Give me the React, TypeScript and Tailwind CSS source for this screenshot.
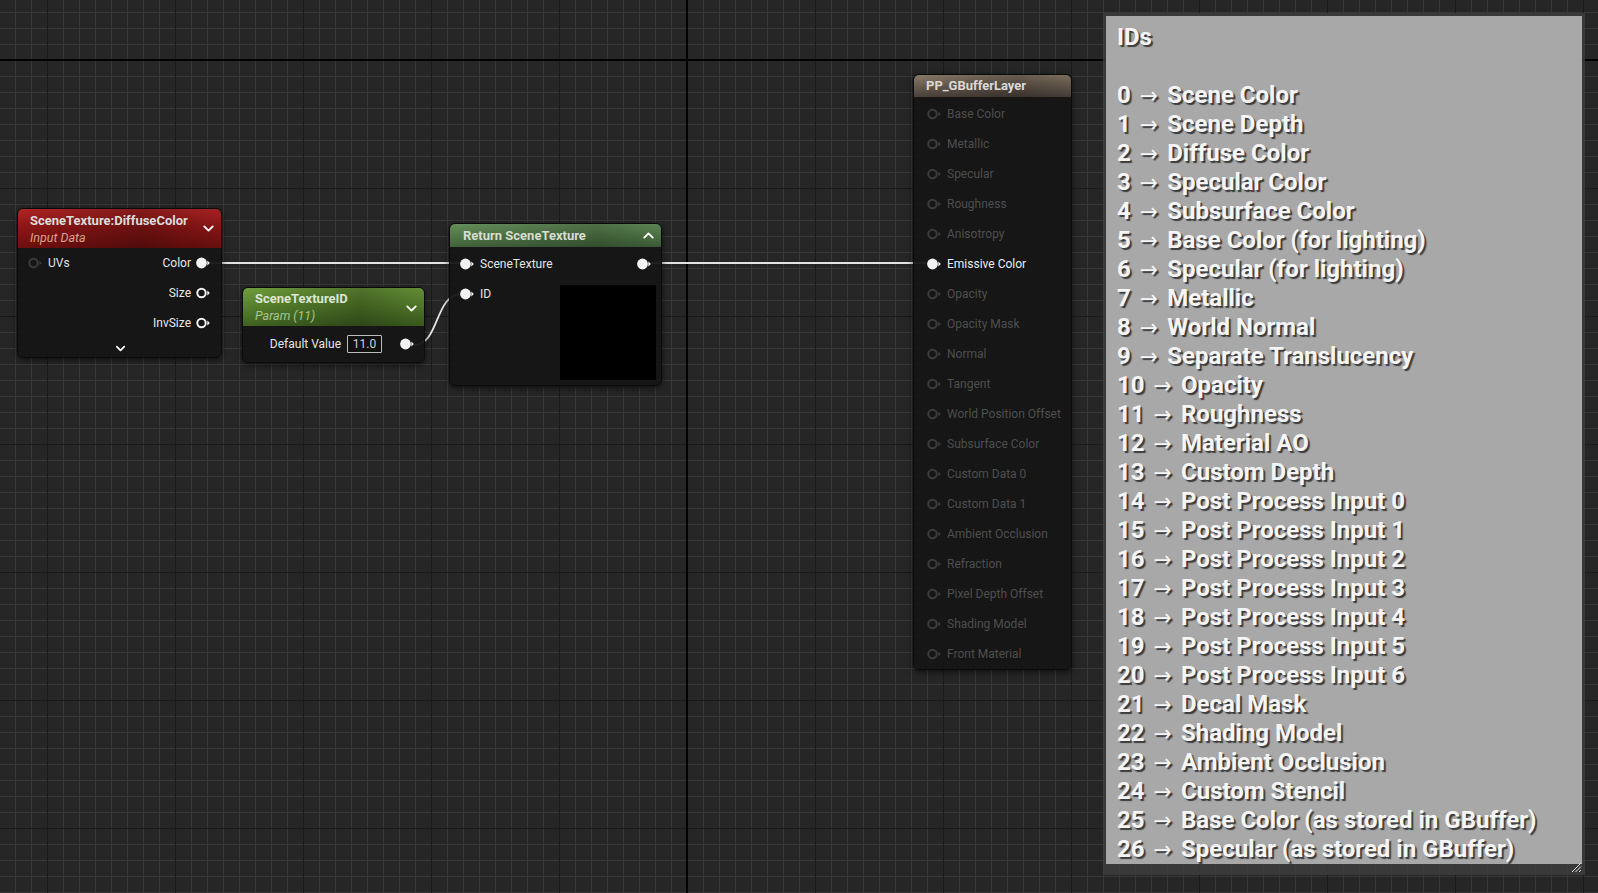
import React from "react";
import { ChevronDown, ChevronUp } from "lucide-react";

type PinKind = "filled" | "ringWhite" | "ringDark" | "ringDim";

function Pin({ kind }: { kind: PinKind }) {
  const color =
    kind === "filled" || kind === "ringWhite"
      ? "#f2f2f2"
      : kind === "ringDark"
      ? "#3a3a3a"
      : "#3c3c3c";
  return (
    <svg width="15" height="12" viewBox="0 0 15 12" className="shrink-0">
      {kind === "filled" ? (
        <circle cx="5.5" cy="6" r="5.4" fill={color} />
      ) : (
        <circle cx="5.5" cy="6" r="4.2" fill="none" stroke={color} strokeWidth="2" />
      )}
      <polygon points="11.3,3.6 13.9,6 11.3,8.4" fill={color} />
    </svg>
  );
}

const ppRows = [
  "Base Color",
  "Metallic",
  "Specular",
  "Roughness",
  "Anisotropy",
  "Emissive Color",
  "Opacity",
  "Opacity Mask",
  "Normal",
  "Tangent",
  "World Position Offset",
  "Subsurface Color",
  "Custom Data 0",
  "Custom Data 1",
  "Ambient Occlusion",
  "Refraction",
  "Pixel Depth Offset",
  "Shading Model",
  "Front Material",
];

const ids = [
  "Scene Color",
  "Scene Depth",
  "Diffuse Color",
  "Specular Color",
  "Subsurface Color",
  "Base Color (for lighting)",
  "Specular (for lighting)",
  "Metallic",
  "World Normal",
  "Separate Translucency",
  "Opacity",
  "Roughness",
  "Material AO",
  "Custom Depth",
  "Post Process Input 0",
  "Post Process Input 1",
  "Post Process Input 2",
  "Post Process Input 3",
  "Post Process Input 4",
  "Post Process Input 5",
  "Post Process Input 6",
  "Decal Mask",
  "Shading Model",
  "Ambient Occlusion",
  "Custom Stencil",
  "Base Color (as stored in GBuffer)",
  "Specular (as stored in GBuffer)",
];

export default function App() {
  return (
    <div className="relative w-[1598px] h-[893px] overflow-hidden font-[Roboto,sans-serif] bg-[#262626] [background-image:linear-gradient(to_right,#1a1a1a_1px,transparent_1px),linear-gradient(to_bottom,#1a1a1a_1px,transparent_1px),linear-gradient(to_right,#383838_1px,transparent_1px),linear-gradient(to_bottom,#383838_1px,transparent_1px)] [background-size:128px_128px,128px_128px,16px_16px,16px_16px] [background-position:47px_60px,47px_60px,15px_12px,15px_12px]">
      {/* origin axes */}
      <div className="absolute left-[686px] top-0 w-[2px] h-full bg-black" />
      <div className="absolute left-0 top-[59px] h-[2px] w-full bg-black" />

      {/* wires */}
      <svg className="absolute left-0 top-0" width="1598" height="893">
        <line x1="210" y1="263" x2="462" y2="263" stroke="#e4e4e4" strokeWidth="1.8" />
        <line x1="648" y1="263" x2="934" y2="263" stroke="#e4e4e4" strokeWidth="1.8" />
        <path d="M 414 345 C 440 345, 434 294, 462 294" fill="none" stroke="#e4e4e4" strokeWidth="1.8" />
      </svg>

      {/* Node 1: SceneTexture:DiffuseColor */}
      <div className="absolute left-[17px] top-[208px] w-[205px] h-[150px] rounded-[6px] bg-[#151515]/95 border border-[#0b0b0b] shadow-[0_2px_6px_rgba(0,0,0,0.6)] overflow-hidden flex flex-col">
        <div className="relative h-[39px] shrink-0 pl-[12px] pt-[4px] bg-[linear-gradient(180deg,#b02424_0%,#8e1616_45%,#6d0f0f_100%)]">
          <div className="absolute inset-0 bg-[linear-gradient(90deg,rgba(0,0,0,0)_0%,rgba(0,0,0,0.25)_60%,rgba(0,0,0,0.05)_100%)]" />
          <div className="relative flex items-start justify-between pr-[4px]">
            <div className="flex flex-col">
              <span className="text-[13px] leading-[16px] font-bold text-[#dcdcdc]">SceneTexture:DiffuseColor</span>
              <span className="text-[12.5px] leading-[17px] italic text-[#d9a08e]">Input Data</span>
            </div>
            <ChevronDown size={17} strokeWidth={2.6} className="text-white mt-[7px]" />
          </div>
        </div>
        <div className="flex flex-col">
          <div className="h-[30px] flex items-center justify-between pl-[10px] pr-[10px]">
            <div className="flex items-center gap-[5px]">
              <Pin kind="ringDark" />
              <span className="text-[12px] text-[#e2e2e2]">UVs</span>
            </div>
            <div className="flex items-center gap-[5px]">
              <span className="text-[12px] text-[#e8e8e8]">Color</span>
              <Pin kind="filled" />
            </div>
          </div>
          <div className="h-[30px] flex items-center justify-end pr-[10px] gap-[5px]">
            <span className="text-[12px] text-[#e8e8e8]">Size</span>
            <Pin kind="ringWhite" />
          </div>
          <div className="h-[30px] flex items-center justify-end pr-[10px] gap-[5px]">
            <span className="text-[12px] text-[#e8e8e8]">InvSize</span>
            <Pin kind="ringWhite" />
          </div>
          <div className="h-[20px] flex items-center justify-center">
            <ChevronDown size={15} strokeWidth={2.8} className="text-white ml-[2px]" />
          </div>
        </div>
      </div>

      {/* Node 2: SceneTextureID */}
      <div className="absolute left-[242px] top-[287px] w-[183px] h-[76px] rounded-[6px] bg-[#151515]/95 border border-[#0b0b0b] shadow-[0_2px_6px_rgba(0,0,0,0.6)] overflow-hidden flex flex-col">
        <div className="relative h-[38px] shrink-0 pl-[12px] pt-[3px] bg-[linear-gradient(180deg,#6f9e3c_0%,#57822c_50%,#3f6220_100%)]">
          <div className="absolute inset-0 bg-[linear-gradient(90deg,rgba(0,0,0,0)_0%,rgba(0,0,0,0.28)_65%,rgba(0,0,0,0.1)_100%)]" />
          <div className="relative flex items-start justify-between pr-[4px]">
            <div className="flex flex-col">
              <span className="text-[13px] leading-[16px] font-bold text-[#dde5d6]">SceneTextureID</span>
              <span className="text-[12.5px] leading-[17px] italic text-[#a9c48f]">Param (11)</span>
            </div>
            <ChevronDown size={17} strokeWidth={2.6} className="text-white mt-[9px]" />
          </div>
        </div>
        <div className="flex-1 flex items-center justify-end pr-[9px]">
          <span className="text-[12px] text-[#e4e4e4]">Default Value</span>
          <div className="ml-[6px] w-[35px] h-[18px] border border-[#bdbdbd] rounded-[1px] flex items-center justify-center text-[12px] text-[#cfcfcf] bg-[#111]">
            11.0
          </div>
          <div className="ml-[18px]">
            <Pin kind="filled" />
          </div>
        </div>
      </div>

      {/* Node 3: Return SceneTexture */}
      <div className="absolute left-[449px] top-[223px] w-[213px] h-[163px] rounded-[6px] bg-[#151515]/95 border border-[#0b0b0b] shadow-[0_2px_6px_rgba(0,0,0,0.6)] overflow-hidden flex flex-col">
        <div className="relative h-[23px] shrink-0 pl-[13px] flex items-center justify-between pr-[4px] bg-[linear-gradient(180deg,#668f5c_0%,#527a49_50%,#41613a_100%)]">
          <div className="absolute inset-0 bg-[linear-gradient(90deg,rgba(0,0,0,0)_0%,rgba(0,0,0,0.22)_70%,rgba(0,0,0,0.08)_100%)]" />
          <span className="relative text-[13px] font-bold text-[#d6ddd3]">Return SceneTexture</span>
          <ChevronUp size={17} strokeWidth={2.6} className="relative text-white" />
        </div>
        <div className="flex pt-[2px] justify-between">
          <div className="flex flex-col pl-[10px]">
            <div className="h-[30px] flex items-center gap-[5px]">
              <Pin kind="filled" />
              <span className="text-[12px] text-[#e4e4e4]">SceneTexture</span>
            </div>
            <div className="h-[30px] flex items-center gap-[5px]">
              <Pin kind="filled" />
              <span className="text-[12px] text-[#e4e4e4]">ID</span>
            </div>
          </div>
          <div className="flex flex-col items-end pr-[5px]">
            <div className="h-[30px] flex items-center pr-[4px]">
              <Pin kind="filled" />
            </div>
            <div className="mt-[6px] w-[96px] h-[95px] bg-black" />
          </div>
        </div>
      </div>

      {/* Node 4: PP_GBufferLayer */}
      <div className="absolute left-[913px] top-[74px] w-[159px] h-[596px] rounded-[6px] bg-[#151515]/95 border border-[#0b0b0b] shadow-[0_2px_6px_rgba(0,0,0,0.6)] overflow-hidden flex flex-col">
        <div className="relative h-[22px] shrink-0 pl-[12px] flex items-center bg-[linear-gradient(180deg,#8a7a68_0%,#6c5f52_45%,#4a423b_100%)]">
          <div className="absolute inset-0 bg-[linear-gradient(90deg,rgba(0,0,0,0)_0%,rgba(0,0,0,0.25)_65%,rgba(0,0,0,0.1)_100%)]" />
          <span className="relative text-[13px] font-bold text-[#dcd8d4]">PP_GBufferLayer</span>
        </div>
        <div className="flex flex-col pt-[2px] pl-[13px]">
          {ppRows.map((r) => {
            const active = r === "Emissive Color";
            return (
              <div key={r} className="h-[30px] flex items-center gap-[5px]">
                <Pin kind={active ? "filled" : "ringDim"} />
                <span className={active ? "text-[12px] text-[#ececec]" : "text-[12px] text-[#4e4e4e]"}>{r}</span>
              </div>
            );
          })}
        </div>
      </div>

      {/* Comment panel */}
      <div className="absolute left-[1103px] top-[13px] w-[482px] h-[862px] bg-[#3e3e3e]/80 pt-[3px] px-[3px] pb-[12px] flex flex-col">
        <div className="flex-1 bg-[#a8a8a8] pl-[11px] pt-[7px] flex flex-col text-[24px] leading-[29px] font-bold text-[#f5f5f5] [text-shadow:2px_2px_1px_rgba(40,40,40,0.85)]">
          <div className="h-[29px]">IDs</div>
          <div className="h-[29px]" />
          {ids.map((t, i) => (
            <div key={i} className="h-[29px] whitespace-nowrap">
              {i}
              <span className="inline-block mx-[9px] leading-[0] font-['DejaVu_Sans',sans-serif] font-normal text-[22px]">→</span>
              {t}
            </div>
          ))}
        </div>
        <svg className="absolute right-[3px] bottom-[2px]" width="12" height="12" viewBox="0 0 12 12">
          <line x1="11" y1="2" x2="2" y2="11" stroke="#e0e0e0" strokeWidth="1" />
          <line x1="11" y1="5.5" x2="5.5" y2="11" stroke="#e0e0e0" strokeWidth="1" />
          <line x1="11" y1="9" x2="9" y2="11" stroke="#e0e0e0" strokeWidth="1" />
        </svg>
      </div>
    </div>
  );
}
